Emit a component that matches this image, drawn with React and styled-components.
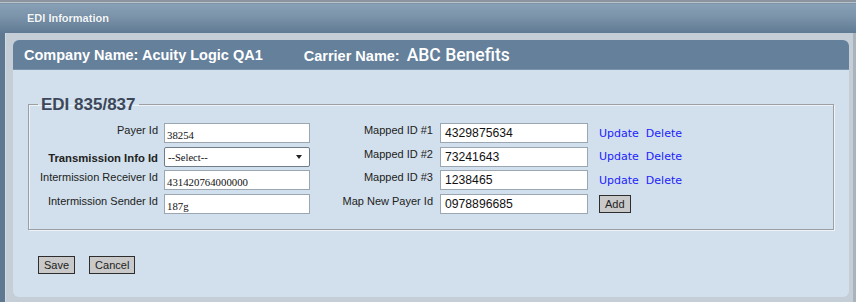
import React from "react";
import styled, { createGlobalStyle } from "styled-components";

const GlobalStyle = createGlobalStyle`
  html, body {
    margin: 0;
    padding: 0;
    background: #c5cdd6;
    font-family: "Liberation Sans", Arial, sans-serif;
  }
`;

const leftRows = [
  { label: "Payer Id", value: "38254" },
  { label: "Transmission Info Id", value: "--Select--", select: true },
  { label: "Intermission Receiver Id", value: "431420764000000" },
  { label: "Intermission Sender Id", value: "187g" },
];

const mappedRows = [
  { label: "Mapped ID #1", value: "4329875634" },
  { label: "Mapped ID #2", value: "73241643" },
  { label: "Mapped ID #3", value: "1238465" },
];

const App = () => {
  return (
    <>
      <GlobalStyle />
      <Window>
        <TopStrip />
        <TitleBar>EDI Information</TitleBar>
        <Frame>
          <Card>
            <CardHeader>
              <HeaderItem>Company Name: Acuity Logic QA1</HeaderItem>
              <HeaderItem>
                Carrier Name: <CarrierValue>ABC Benefits</CarrierValue>
              </HeaderItem>
            </CardHeader>
            <CardBody>
              <Fieldset>
                <Legend>EDI 835/837</Legend>
                <Columns>
                  <LeftGrid>
                    {leftRows.map((row) => (
                      <React.Fragment key={row.label}>
                        <Label bold={row.select}>{row.label}</Label>
                        {row.select ? (
                          <SelectBox>
                            <span>{row.value}</span>
                            <Caret />
                          </SelectBox>
                        ) : (
                          <SerifInput>{row.value}</SerifInput>
                        )}
                      </React.Fragment>
                    ))}
                  </LeftGrid>
                  <RightGrid>
                    {mappedRows.map((row) => (
                      <React.Fragment key={row.label}>
                        <Label>{row.label}</Label>
                        <SansInput>{row.value}</SansInput>
                        <Links>
                          <Link>Update</Link>
                          <Link>Delete</Link>
                        </Links>
                      </React.Fragment>
                    ))}
                    <Label>Map New Payer Id</Label>
                    <SansInput>0978896685</SansInput>
                    <Links>
                      <Button>Add</Button>
                    </Links>
                  </RightGrid>
                </Columns>
              </Fieldset>
              <Actions>
                <Button>Save</Button>
                <Button>Cancel</Button>
              </Actions>
            </CardBody>
          </Card>
        </Frame>
      </Window>
    </>
  );
};
export default App;

const Window = styled.div`
  width: 856px;
  height: 302px;
  background: #5e7891;
  overflow: hidden;
`;
const TopStrip = styled.div`
  height: 4px;
  background: linear-gradient(#8c959f 0, #8c959f 2px, #b9c1c9 2px, #b9c1c9 3px, #7f95aa 3px);
`;
const TitleBar = styled.div`
  height: 29px;
  box-sizing: border-box;
  padding: 8px 0 0 27px;
  background: linear-gradient(#88a0b5, #7b93a9 45%, #5f7a93);
  color: #f4f7fa;
  font-size: 11px;
  font-weight: bold;
  text-shadow: 0 0 1px rgba(40, 60, 80, 0.4);
`;
const Frame = styled.div`
  margin-left: 5px;
  height: 269px;
  box-sizing: border-box;
  padding: 7px 4px 5px 7px;
  background: #c5cdd6;
  border-right: 3px solid #a9b3bd;
  border-left: 1px solid #d3dae1;
`;
const Card = styled.div`
  height: 100%;
  display: flex;
  flex-direction: column;
  border-radius: 6px;
  overflow: hidden;
  background: #d1e0ec;
`;
const CardHeader = styled.div`
  height: 30px;
  flex-shrink: 0;
  box-sizing: border-box;
  display: flex;
  align-items: center;
  gap: 41px;
  padding: 1px 0 0 11px;
  background: #64809b;
  border-bottom: 1px solid #7d95ab;
`;
const HeaderItem = styled.div`
  color: #ffffff;
  font-size: 14.5px;
  font-weight: bold;
  white-space: nowrap;
`;
const CarrierValue = styled.span`
  font-family: "Roboto", "Liberation Sans", sans-serif;
  font-weight: 500;
  font-size: 17.5px;
  margin-left: 3px;
`;
const CardBody = styled.div`
  flex: 1;
  padding: 25px 15px 0 15px;
`;
const Fieldset = styled.fieldset`
  margin: 0;
  padding: 9px 0 15px 0;
  border: 1px solid #9c9fa3;
  box-shadow: inset 1px 1px 0 #eef3f7, 1px 1px 0 #eef3f7;
`;
const Legend = styled.legend`
  margin-left: 9px;
  padding: 0 3px;
  color: #3c475a;
  font-size: 17px;
  font-weight: bold;
  line-height: 19px;
`;
const Columns = styled.div`
  display: flex;
  gap: 13px;
  padding-left: 8px;
`;
const LeftGrid = styled.div`
  display: grid;
  grid-template-columns: 121px 146px;
  grid-auto-rows: 20px;
  column-gap: 6px;
  row-gap: 3.7px;
`;
const RightGrid = styled.div`
  display: grid;
  grid-template-columns: 110px 148px auto;
  grid-auto-rows: 20px;
  column-gap: 7px;
  row-gap: 3.7px;
`;
const Label = styled.div`
  text-align: right;
  white-space: nowrap;
  font-size: ${(p) => (p.bold ? "11.3px" : "11px")};
  font-weight: ${(p) => (p.bold ? "bold" : "normal")};
  color: #222;
  line-height: 14px;
  padding-top: ${(p) => (p.bold ? "4px" : "0")};
`;
const BaseInput = styled.div`
  box-sizing: border-box;
  height: 20px;
  background: #fff;
  border: 1px solid #9aa7b3;
  display: flex;
  align-items: center;
  white-space: nowrap;
  color: #111;
`;
const SerifInput = styled(BaseInput)`
  padding: 3px 0 0 2px;
  font-family: "Liberation Serif", "Times New Roman", serif;
  font-size: 10.8px;
`;
const SansInput = styled(BaseInput)`
  padding-left: 4px;
  font-size: 12.2px;
`;
const SelectBox = styled(BaseInput)`
  justify-content: space-between;
  border-color: #6f7d8b;
  border-radius: 2px;
  padding: 1px 7px 0 3px;
  font-family: "Liberation Serif", "Times New Roman", serif;
  font-size: 10.5px;
`;
const Caret = styled.span`
  width: 0;
  height: 0;
  border-left: 3.5px solid transparent;
  border-right: 3.5px solid transparent;
  border-top: 4px solid #222;
`;
const Links = styled.div`
  display: flex;
  align-items: center;
  gap: 7px;
  padding-left: 4px;
`;
const Link = styled.span`
  font-family: "DejaVu Sans", Verdana, sans-serif;
  font-size: 11px;
  color: #1d1dff;
  cursor: pointer;
`;
const Button = styled.button`
  box-sizing: border-box;
  height: 18px;
  padding: 0 5px;
  background: #c9c9c9;
  border: 1px solid #2e2e2e;
  font-family: "Liberation Sans", Arial, sans-serif;
  font-size: 11px;
  color: #222;
  cursor: pointer;
`;
const Actions = styled.div`
  display: flex;
  gap: 14px;
  margin: 26px 0 0 10px;
`;
